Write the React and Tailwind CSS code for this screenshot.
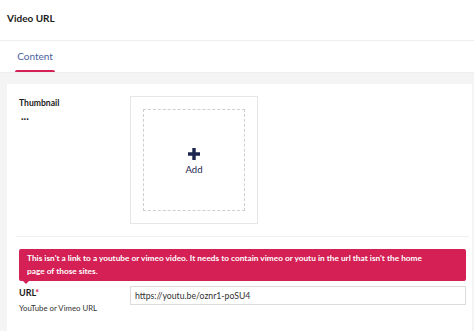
export default function App() {
  return (
    <div className="w-[474px] h-[331px] overflow-hidden bg-white" style={{ fontFamily: "Lato, 'Noto Sans', sans-serif" }}>
      <div className="h-[41px] flex items-center px-[7px] border-b border-[#eeeeee]">
        <span className="text-[10px] font-bold text-[#1b1b1b] -mt-[4px]">Video URL</span>
      </div>
      <div className="h-[32px] flex px-[15px] border-b border-[#eeeeee]">
        <div className="relative w-[40px] flex items-center justify-center">
          <span className="text-[10px] text-[#4a5f9e] -mt-[1px]">Content</span>
          <div className="absolute left-0 right-0 bottom-0 h-[2px] rounded-t bg-[#d42054]"></div>
        </div>
      </div>
      <div className="bg-[#f4f4f4] h-[258px] pt-[11px] pl-[7px] pr-[2px]">
        <div className="bg-white h-full pl-[12px] pr-[6px] pt-[12px]">
          <div className="flex pb-[12px] border-b border-[#f0f0f0] mx-[-3px] px-[3px]">
            <div className="w-[111px]">
              <div className="text-[8.6px] font-bold text-[#1b1b1b] leading-[12px] pt-[1px]">Thumbnail</div>
              <div className="text-[11px] font-bold text-[#1b1b1b] leading-[8px] pl-[2px] mt-[3px]">...</div>
            </div>
            <div className="w-[128px] h-[128px] border border-[#e6e6e6] p-[12px]">
              <div className="w-full h-full border border-dashed border-[#cfcfcf] flex flex-col items-center justify-center">
                <svg width="14" height="14" viewBox="0 0 14 14" className="mt-[4px]">
                  <path d="M7 1 V13 M1 7 H13" stroke="#1b264f" strokeWidth="3.4" />
                </svg>
                <span className="text-[9.5px] text-[#1b264f] mt-[2px]">Add</span>
              </div>
            </div>
          </div>
          <div className="mt-[12px] relative">
            <div className="bg-[#d42054] text-white text-[8.3px] font-bold leading-[13px] rounded-[2px] pl-[8px] pr-[28px] py-[3px] h-[32px]">
              This isn't a link to a youtube or vimeo video. It needs to contain vimeo or youtu in the url that isn't the home page of those sites.
            </div>
            <div className="absolute left-[3px] top-[31px] w-0 h-0 border-l-[4px] border-r-[4px] border-t-[4px] border-l-transparent border-r-transparent border-t-[#d42054]"></div>
          </div>
          <div className="flex mt-[5px]">
            <div className="w-[111px]">
              <div className="text-[9px] font-bold text-[#1b1b1b] leading-[12px] mt-[1px]">URL<span className="text-[#d42054]">*</span></div>
              <div className="text-[7.8px] text-[#333] mt-[4px]">YouTube or Vimeo URL</div>
            </div>
            <div className="flex-1 h-[19px] border border-[#dcdcdc] flex items-center px-[4px]">
              <span className="text-[8.7px] text-[#333]">https://youtu.be/oznr1-poSU4</span>
            </div>
          </div>
        </div>
      </div>
    </div>
  );
}
